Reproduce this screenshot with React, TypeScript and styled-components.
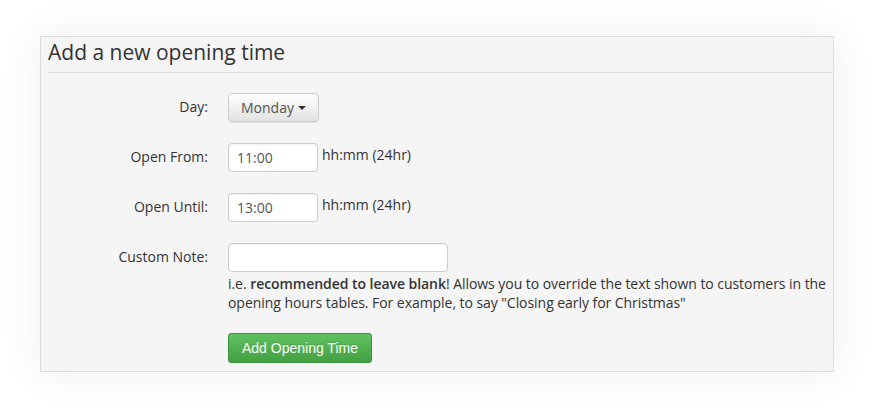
import React from 'react';
import styled, { createGlobalStyle } from 'styled-components';

const GlobalStyle = createGlobalStyle`
  html, body {
    margin: 0;
    padding: 0;
    background: #ffffff;
  }
  body {
    font-family: 'Open Sans', 'DejaVu Sans', sans-serif;
    font-size: 14px;
    color: #333;
  }
`;

const rows = [
  { label: 'Open From:', value: '11:00' },
  { label: 'Open Until:', value: '13:00' },
];

const App: React.FC = () => {
  return (
    <>
      <GlobalStyle />
      <Page>
        <Panel>
          <Title>Add a new opening time</Title>
          <Form>
            <Row>
              <Label>Day:</Label>
              <Control>
                <DropButton type="button">
                  Monday <Caret />
                </DropButton>
              </Control>
            </Row>
            {rows.map(row => (
              <Row key={row.label}>
                <Label>{row.label}</Label>
                <Control>
                  <Inline>
                    <TimeInput defaultValue={row.value} />
                    <Hint>hh:mm (24hr)</Hint>
                  </Inline>
                </Control>
              </Row>
            ))}
            <Row>
              <Label>Custom Note:</Label>
              <Control>
                <NoteInput />
                <Help>
                  i.e. <strong>recommended to leave blank</strong>! Allows you to override the text shown to
                  customers in the opening hours tables. For example, to say "Closing early for Christmas"
                </Help>
              </Control>
            </Row>
            <Row>
              <Label />
              <Control>
                <SubmitButton type="button">Add Opening Time</SubmitButton>
              </Control>
            </Row>
          </Form>
        </Panel>
      </Page>
    </>
  );
};

export default App;

const Page = styled.div`
  padding: 36px 40px 44px 40px;
`;

const Panel = styled.div`
  width: 792px;
  height: 334px;
  background: #f5f5f5;
  border: 1px solid #dcdcdc;
  box-shadow: 0 0 40px rgba(0, 0, 0, 0.07);
`;

const Title = styled.h3`
  margin: 0 0 0 7px;
  padding: 2px 0 6px 0;
  font-size: 21px;
  font-weight: 400;
  line-height: 27px;
  color: #333;
  border-bottom: 1px solid #e0e0e0;
`;

const Form = styled.div`
  display: flex;
  flex-direction: column;
  gap: 21px;
  padding: 20px 0 0 0;
`;

const Row = styled.div`
  display: grid;
  grid-template-columns: 167px 1fr;
  column-gap: 20px;
  align-items: start;
`;

const Label = styled.label`
  text-align: right;
  line-height: 20px;
  padding-top: 4px;
  color: #333;
`;

const Control = styled.div`
  display: flex;
  flex-direction: column;
  align-items: flex-start;
`;

const Inline = styled.div`
  display: flex;
  align-items: flex-start;
  gap: 4px;
`;

const Hint = styled.span`
  line-height: 20px;
  padding-top: 2px;
  color: #333;
`;

const DropButton = styled.button`
  display: inline-flex;
  align-items: center;
  gap: 4px;
  height: 29px;
  padding: 0 12px;
  font-family: 'Open Sans', 'DejaVu Sans', sans-serif;
  font-size: 14px;
  color: #555;
  background: linear-gradient(to bottom, #ffffff 0%, #e2e2e2 100%);
  border: 1px solid #cccccc;
  border-radius: 4px;
  box-shadow: 0 1px 1px rgba(0, 0, 0, 0.08);
`;

const Caret = styled.span`
  display: inline-block;
  width: 0;
  height: 0;
  border-left: 4px solid transparent;
  border-right: 4px solid transparent;
  border-top: 4px solid #333;
  margin-top: 1px;
`;

const TextBox = styled.input`
  box-sizing: border-box;
  height: 29px;
  padding: 4px 8px;
  font-family: 'Open Sans', 'DejaVu Sans', sans-serif;
  font-size: 14px;
  color: #555;
  background: #ffffff;
  border: 1px solid #cccccc;
  border-radius: 4px;
  box-shadow: inset 0 1px 1px rgba(0, 0, 0, 0.06);
  outline: none;
`;

const TimeInput = styled(TextBox)`
  width: 90px;
`;

const NoteInput = styled(TextBox)`
  width: 220px;
`;

const Help = styled.p`
  margin: 2px 0 0 0;
  line-height: 19px;
  letter-spacing: -0.05px;
  color: #333;

  strong {
    font-weight: 600;
  }
`;

const SubmitButton = styled.button`
  height: 30px;
  padding: 0 13px;
  font-family: 'Liberation Sans', Arial, sans-serif;
  font-size: 14px;
  color: #ffffff;
  background: linear-gradient(to bottom, #5fc15f 0%, #43a043 100%);
  border: 1px solid #3e943e;
  border-radius: 3px;
  text-shadow: 0 -1px 0 rgba(0, 0, 0, 0.15);
`;
